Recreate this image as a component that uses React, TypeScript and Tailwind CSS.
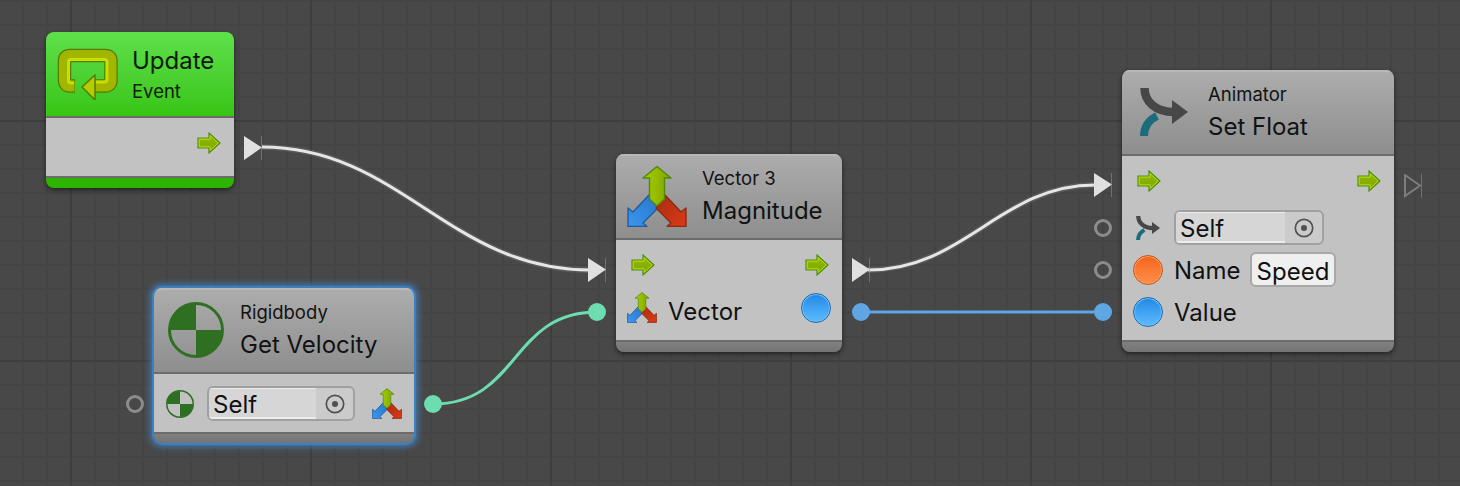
const FlowArrow = () => (
  <svg viewBox="0 0 24 22" className="w-6 h-[22px] shrink-0">
    <defs>
      <linearGradient id="flowFill" x1="0" y1="0" x2="0" y2="1">
        <stop offset="0" stopColor="#93bd00" />
        <stop offset="1" stopColor="#7ea300" />
      </linearGradient>
    </defs>
    <polygon points="1,6 12,6 12,1 23,11 12,21 12,16 1,16" fill="url(#flowFill)" stroke="#4f8f10" strokeWidth="1.2" />
    <polygon points="2.2,7.2 13.2,7.2 13.2,3.6 21.2,11 13.2,18.4 13.2,14.8 2.2,14.8" fill="none" stroke="#b4dc1e" strokeWidth="1" />
  </svg>
);

const VectorIcon = ({ className }: { className: string }) => (
  <svg viewBox="0 0 60 61" className={className}>
    <defs>
      <linearGradient id="vecGreen" x1="0" y1="0" x2="1" y2="0">
        <stop offset="0" stopColor="#a8d000" />
        <stop offset="1" stopColor="#7fa400" />
      </linearGradient>
      <linearGradient id="vecBlue" x1="1" y1="0" x2="0" y2="1">
        <stop offset="0" stopColor="#2a74cc" />
        <stop offset="1" stopColor="#3a98ec" />
      </linearGradient>
      <linearGradient id="vecRed" x1="0" y1="0" x2="1" y2="1">
        <stop offset="0" stopColor="#a82c12" />
        <stop offset="1" stopColor="#dc3a18" />
      </linearGradient>
    </defs>
    <polygon points="1,42 6,46 22,29 31,42 16,57 20,60.5 1,60.5" fill="url(#vecBlue)" stroke="#1f5c9e" strokeWidth="1.4" strokeLinejoin="round" />
    <polygon points="59,42 54,46 38,29 29,42 44,57 40,60.5 59,60.5" fill="url(#vecRed)" stroke="#8a2a12" strokeWidth="1.4" strokeLinejoin="round" />
    <polygon points="30,0.5 44,12 37.5,12 37.5,33 30,40 22.5,33 22.5,12 16,12" fill="url(#vecGreen)" stroke="#4f8a08" strokeWidth="1.4" strokeLinejoin="round" />
  </svg>
);

const LoopIcon = () => (
  <svg viewBox="0 0 61 52" className="w-[61px] h-[52px] shrink-0 blur-[0.3px]">
    <g fill="none" strokeLinejoin="round">
      <path d="M18 38 H13 Q7.5 38 7.5 32 V13 Q7.5 7.5 13 7.5 H48 Q54 7.5 54 13 V32 Q54 38 48 38 H32" stroke="#557a00" strokeWidth="13.5" />
      <path d="M17.5 38 H13 Q7.5 38 7.5 32 V13 Q7.5 7.5 13 7.5 H48 Q54 7.5 54 13 V32 Q54 38 48 38 H32" stroke="#a2b600" strokeWidth="11" />
      <path d="M17 35 H14 Q11.5 35 11.5 32 V14 Q11.5 11.5 14 11.5 H47 Q50 11.5 50 14 V31 Q50 34 47 34 H32" stroke="#c8e000" strokeWidth="3" />
    </g>
    <polygon points="25,39 38,27 38,52" fill="#b4cc00" stroke="#557a00" strokeWidth="1.5" strokeLinejoin="round" />
  </svg>
);

const AnimatorIcon = ({ className }: { className: string }) => (
  <svg viewBox="0 0 48 48" className={className}>
    <path d="M4.5 0 C4.5 14 16 24 34 24" fill="none" stroke="#474747" strokeWidth="8.5" />
    <polygon points="32,12 48,24 32,36" fill="#474747" />
    <path d="M4 48 C4 39 9 32 17 28" fill="none" stroke="#1d6c7d" strokeWidth="8" />
  </svg>
);

const RigidbodyIcon = ({ className }: { className: string }) => (
  <svg viewBox="0 0 56 56" className={className}>
    <path d="M28 28 V2 A26 26 0 0 0 2 28 Z" fill="#2f6f22" />
    <path d="M28 28 V54 A26 26 0 0 0 54 28 Z" fill="#2f6f22" />
    <circle cx="28" cy="28" r="26.5" fill="none" stroke="#2f6f22" strokeWidth="3" />
  </svg>
);

const TargetIcon = () => (
  <svg viewBox="0 0 20 20" className="w-5 h-5">
    <circle cx="10" cy="10" r="8.7" fill="none" stroke="#505050" strokeWidth="1.7" />
    <circle cx="10" cy="10" r="3" fill="#505050" />
  </svg>
);

const ObjectField = () => (
  <div className="flex items-center w-full h-full rounded-md border-2 border-[#a0a0a0] bg-[#cbcbcb] overflow-hidden">
    <div className="flex items-center h-full flex-1 bg-[#d6d6d6] border-t border-b-2 border-[#ececec] pl-[4px]">
      <span className="pt-[4px] text-[24px] leading-none text-[#111]">Self</span>
    </div>
    <div className="flex items-center justify-center w-[37px] h-full">
      <TargetIcon />
    </div>
  </div>
);

const BluePin = () => (
  <div className="w-[30px] h-[30px] rounded-full shrink-0 border border-[#2068a8] bg-linear-to-b from-[#2288e6] to-[#5cbcff] shadow-[inset_0_0_0_1px_#77c6ff]" />
);

const OrangePin = () => (
  <div className="w-[30px] h-[30px] rounded-full shrink-0 border border-[#c4561c] bg-linear-to-b from-[#f4641a] to-[#ff9048] shadow-[inset_0_0_0_1px_#ffa468]" />
);

const HeaderText = ({ sub, title }: { sub: string; title: string }) => (
  <div className="flex flex-col gap-[6px] mb-[3px] text-[#121212]">
    <span className="text-[18.5px] leading-[26px]">{sub}</span>
    <span className="text-[24px] leading-[28px]">{title}</span>
  </div>
);

const nodeBase = "absolute flex flex-col overflow-hidden rounded-lg shadow-[0_2px_5px_rgba(0,0,0,0.55)]";
const grayHeader = "flex items-center border-b-2 border-[#6c6c6c] bg-linear-to-b from-[#adadad] to-[#8e8e8e] shadow-[inset_0_2px_0_#b8b8b8]";
const grayFooter = "flex-1 border-t-2 border-[#6c6c6c] bg-linear-to-b from-[#808080] to-[#747474]";

const Triangle = ({ hollow, className }: { hollow?: boolean; className: string }) => (
  <svg viewBox="0 0 18 24" className={`absolute w-[18px] h-6 ${className}`}>
    {hollow ? (
      <polygon points="1,1 16,11.5 1,22" fill="none" stroke="#7d7d7d" strokeWidth="2" />
    ) : (
      <polygon points="0,0 18,11.5 0,24" fill="#e0e0e0" />
    )}
    <line x1="17.5" y1="0" x2="17.5" y2="24" stroke="#9a9a9a" strokeOpacity="0.5" strokeWidth="1" />
  </svg>
);

const HollowPort = ({ className }: { className: string }) => (
  <div className={`absolute w-[18px] h-[18px] rounded-full border-[3px] border-[#8c8c8c] ${className}`} />
);

const FilledPort = ({ className }: { className: string }) => (
  <div className={`absolute w-[18px] h-[18px] rounded-full ${className}`} />
);

export default function App() {
  return (
    <div className="relative w-[1460px] h-[486px] overflow-hidden bg-[#484848] font-['Inter',sans-serif] [background-image:linear-gradient(#3e3e3e_2px,transparent_2px),linear-gradient(90deg,#3e3e3e_2px,transparent_2px),linear-gradient(#444444_2px,transparent_2px),linear-gradient(90deg,#444444_2px,transparent_2px)] [background-size:240px_240px,240px_240px,24px_24px,24px_24px] [background-position:0_120px,70px_0,0_0,22px_0]">
      {/* Wires */}
      <svg className="absolute inset-0 w-full h-full" viewBox="0 0 1460 486" fill="none">
        <g stroke="#ffffff" strokeOpacity="0.1" strokeWidth="6">
          <path d="M262 147 C400 147 450 270 590 270" />
          <path d="M868 270 C965 270 1000 185 1095 185" />
        </g>
        <g stroke="#e6e6e6" strokeWidth="3">
          <path d="M262 147 C400 147 450 270 590 270" />
          <path d="M868 270 C965 270 1000 185 1095 185" />
        </g>
        <path d="M433 404 C520 404 510 312 597 312" stroke="#6ddcb0" strokeWidth="3" />
        <path d="M861 312 H1103" stroke="#5ea6e4" strokeWidth="3" />
      </svg>

      {/* Ports */}
      <Triangle className="left-[244px] top-[136px]" />
      <Triangle className="left-[588px] top-[258px]" />
      <Triangle className="left-[852px] top-[258px]" />
      <Triangle className="left-[1094px] top-[173px]" />
      <Triangle hollow className="left-[1404px] top-[174px]" />
      <HollowPort className="left-[126px] top-[395px]" />
      <HollowPort className="left-[1094px] top-[219px]" />
      <HollowPort className="left-[1094px] top-[261px]" />
      <FilledPort className="left-[424px] top-[395px] bg-[#6ddcb0]" />
      <FilledPort className="left-[588px] top-[303px] bg-[#6ddcb0]" />
      <FilledPort className="left-[852px] top-[303px] bg-[#5ea6e4]" />
      <FilledPort className="left-[1094px] top-[303px] bg-[#5ea6e4]" />

      {/* Update Event */}
      <div className={`${nodeBase} left-[46px] top-[32px] w-[188px] h-[156px]`}>
        <div className="flex items-center h-[86px] pl-[11px] gap-[15px] border-b-2 border-[#6c6c6c] bg-linear-to-b from-[#5ee04a] to-[#38c512]">
          <LoopIcon />
          <div className="flex flex-col pt-[4px] -ml-px text-[#0d1a08]">
            <span className="text-[24px] leading-[30px]">Update</span>
            <span className="text-[18.5px] leading-[30px]">Event</span>
          </div>
        </div>
        <div className="flex items-center justify-end h-[58px] pr-[13px] pb-[8px] bg-[#c2c2c2]">
          <FlowArrow />
        </div>
        <div className="flex-1 border-t-2 border-[#6c6c6c] bg-[#2db400]" />
      </div>

      {/* Get Velocity */}
      <div className="absolute left-[154px] top-[288px] w-[260px] h-[155px] rounded-lg shadow-[0_0_0_2px_#3a80c4,0_0_6px_4px_rgba(66,140,214,0.7)]">
        <div className="flex flex-col h-full overflow-hidden rounded-lg">
          <div className={`${grayHeader} h-[86px] pl-[14px] gap-4`}>
            <RigidbodyIcon className="w-14 h-14 shrink-0" />
            <HeaderText sub="Rigidbody" title="Get Velocity" />
          </div>
          <div className="flex items-center h-[58px] pt-px pl-3 pr-3 bg-[#c2c2c2]">
            <RigidbodyIcon className="w-7 h-7 shrink-0" />
            <div className="ml-[13px] w-[148px] h-[35px]">
              <ObjectField />
            </div>
            <VectorIcon className="ml-[17px] w-[30px] h-[31px]" />
          </div>
          <div className={grayFooter} />
        </div>
      </div>

      {/* Vector 3 Magnitude */}
      <div className={`${nodeBase} left-[616px] top-[154px] w-[226px] h-[198px]`}>
        <div className={`${grayHeader} h-[86px] pl-[11px] gap-[15px]`}>
          <VectorIcon className="w-[60px] h-[61px] shrink-0" />
          <HeaderText sub="Vector 3" title="Magnitude" />
        </div>
        <div className="flex flex-col h-[100px] pt-[14px] px-[11px] gap-[16px] bg-[#c2c2c2]">
          <div className="flex items-center justify-between pl-1 pr-[2px] h-[22px]">
            <FlowArrow />
            <FlowArrow />
          </div>
          <div className="flex items-center h-[31px]">
            <VectorIcon className="w-[30px] h-[31px] shrink-0" />
            <span className="self-end -mb-px ml-[11px] text-[24px] leading-none text-[#111]">Vector</span>
            <div className="ml-auto">
              <BluePin />
            </div>
          </div>
        </div>
        <div className={grayFooter} />
      </div>

      {/* Animator Set Float */}
      <div className={`${nodeBase} left-[1122px] top-[70px] w-[272px] h-[282px]`}>
        <div className={`${grayHeader} h-[86px] pl-[18px] gap-5`}>
          <AnimatorIcon className="w-12 h-12 shrink-0" />
          <HeaderText sub="Animator" title="Set Float" />
        </div>
        <div className="flex flex-col h-[184px] pt-[14px] pl-[11px] pr-[13px] bg-[#c2c2c2]">
          <div className="flex items-center justify-between pl-1 h-[22px]">
            <FlowArrow />
            <FlowArrow />
          </div>
          <div className="flex items-center h-[35px] mt-[18px]">
            <AnimatorIcon className="ml-[3px] w-6 h-6 shrink-0" />
            <div className="ml-[14px] w-[150px] h-[35px]">
              <ObjectField />
            </div>
          </div>
          <div className="flex items-center h-[35px] mt-[7px]">
            <OrangePin />
            <span className="pt-[2px] ml-[11px] text-[24px] leading-none text-[#111]">Name</span>
            <div className="flex items-center ml-[9px] w-[86px] h-[35px] pl-[5px] rounded-md border-2 border-[#a8a8a8] bg-[#efefef]">
              <span className="pt-[4px] text-[24px] leading-none text-[#111]">Speed</span>
            </div>
          </div>
          <div className="flex items-center h-[30px] mt-[10px]">
            <BluePin />
            <span className="pt-[2px] ml-[11px] text-[24px] leading-none text-[#111]">Value</span>
          </div>
        </div>
        <div className={grayFooter} />
      </div>
    </div>
  );
}
